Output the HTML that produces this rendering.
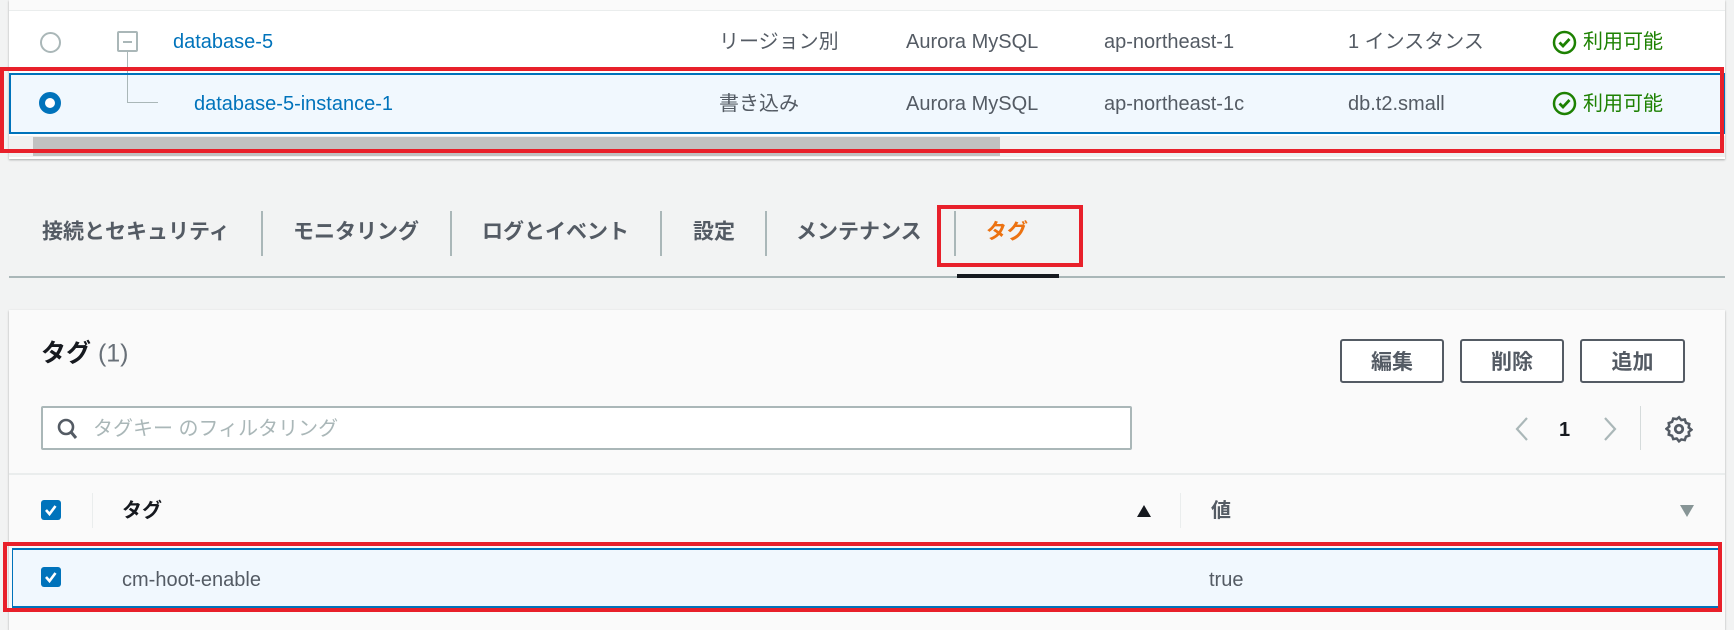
<!DOCTYPE html>
<html><head><meta charset="utf-8"><style>
*{box-sizing:border-box;margin:0;padding:0}
body{width:1734px;height:625px;background:#f2f3f3;position:relative;overflow:hidden;font-family:"Liberation Sans","Noto Sans CJK JP",sans-serif;color:#545b64;font-size:20px}
.a{position:absolute;white-space:nowrap}
.t{line-height:1;transform:translateY(-50%)}
.red{position:absolute;border:4px solid #e8202a}
.link{color:#0073bb}
.tab{font-weight:bold;font-size:21px;color:#545b64}
.sep{position:absolute;width:2px;background:#aab7b8}
.btn{position:absolute;border:2px solid #545b64;border-radius:3px;background:#fff;font-weight:bold;font-size:21px;display:flex;align-items:center;justify-content:center;color:#545b64}
.cb{position:absolute;width:20px;height:20px;background:#0073bb;border-radius:3px}
</style></head><body>
<div class="a" style="left:9px;top:0;width:1716px;height:159px;background:#fff;box-shadow:0 1px 2px rgba(0,0,0,.3)"></div>
<div class="a" style="left:9px;top:0;width:1716px;height:11px;background:#fafafa;border-bottom:1px solid #eaeded"></div>
<div class="a" style="left:40px;top:32px;width:21px;height:21px;border:2px solid #aab7b8;border-radius:50%"></div>
<div class="a" style="left:117px;top:31px;width:21px;height:21px;border:2px solid #aab7b8;border-radius:2px"></div>
<div class="a" style="left:123px;top:41px;width:9px;height:2px;background:#aab7b8"></div>
<div class="a" style="left:127px;top:52px;width:1px;height:51px;background:#aab7b8"></div>
<div class="a" style="left:127px;top:102px;width:31px;height:1px;background:#aab7b8"></div>
<div class="a t link" style="left:173px;top:42px">database-5</div>
<div class="a t" style="left:719px;top:42px">リージョン別</div>
<div class="a t" style="left:906px;top:42px">Aurora MySQL</div>
<div class="a t" style="left:1104px;top:42px">ap-northeast-1</div>
<div class="a t" style="left:1348px;top:42px">1 インスタンス</div>
<svg class="a" style="left:1552px;top:30px" width="25" height="25" viewBox="0 0 25 25"><circle cx="12.5" cy="12.5" r="10.5" fill="none" stroke="#1d8102" stroke-width="2.5"/><path d="M7.5 12.5l3.5 3.5 6.5-7" fill="none" stroke="#1d8102" stroke-width="2.8"/></svg>
<div class="a t" style="left:1583px;top:42px;color:#1d8102">利用可能</div>
<div class="a" style="left:9px;top:73px;width:1716px;height:61px;background:#f1f8fe;border:2px solid #0073bb"></div>
<div class="a" style="left:39px;top:92px;width:22px;height:22px;border:6px solid #0073bb;border-radius:50%;background:#fff"></div>
<div class="a" style="left:127px;top:75px;width:1px;height:28px;background:#aab7b8"></div>
<div class="a" style="left:127px;top:102px;width:31px;height:1px;background:#aab7b8"></div>
<div class="a t link" style="left:194px;top:104px">database-5-instance-1</div>
<div class="a t" style="left:719px;top:104px">書き込み</div>
<div class="a t" style="left:906px;top:104px">Aurora MySQL</div>
<div class="a t" style="left:1104px;top:104px">ap-northeast-1c</div>
<div class="a t" style="left:1348px;top:104px">db.t2.small</div>
<svg class="a" style="left:1552px;top:91px" width="25" height="25" viewBox="0 0 25 25"><circle cx="12.5" cy="12.5" r="10.5" fill="none" stroke="#1d8102" stroke-width="2.5"/><path d="M7.5 12.5l3.5 3.5 6.5-7" fill="none" stroke="#1d8102" stroke-width="2.8"/></svg>
<div class="a t" style="left:1583px;top:104px;color:#1d8102">利用可能</div>
<div class="a" style="left:9px;top:136px;width:1716px;height:21px;background:#f0f0f0"></div>
<div class="a" style="left:33px;top:137px;width:967px;height:19px;background:#c1c1c1"></div>
<div class="red" style="left:0;top:67px;width:1724px;height:86px"></div>
<div class="a t tab" style="left:42px;top:232px">接続とセキュリティ</div>
<div class="sep" style="left:261px;top:211px;height:45px"></div>
<div class="a t tab" style="left:293px;top:232px">モニタリング</div>
<div class="sep" style="left:450px;top:211px;height:45px"></div>
<div class="a t tab" style="left:482px;top:232px">ログとイベント</div>
<div class="sep" style="left:660px;top:211px;height:45px"></div>
<div class="a t tab" style="left:693px;top:232px">設定</div>
<div class="sep" style="left:765px;top:211px;height:45px"></div>
<div class="a t tab" style="left:796px;top:232px">メンテナンス</div>
<div class="sep" style="left:954px;top:211px;height:45px"></div>
<div class="a t tab" style="left:986px;top:232px;color:#ec7211">タグ</div>
<div class="a" style="left:9px;top:276px;width:1716px;height:2px;background:#aab7b8"></div>
<div class="a" style="left:957px;top:274px;width:102px;height:4px;background:#16191f"></div>
<div class="red" style="left:937px;top:205px;width:146px;height:62px"></div>
<div class="a" style="left:9px;top:310px;width:1716px;height:320px;background:#fafafa;box-shadow:0 1px 2px rgba(0,0,0,.3)"></div>
<div class="a t" style="left:41px;top:354px;font-size:25px;font-weight:bold;color:#16191f">タグ <span style="font-weight:normal;color:#687078">(1)</span></div>
<div class="btn" style="left:1340px;top:339px;width:104px;height:44px">編集</div>
<div class="btn" style="left:1460px;top:339px;width:104px;height:44px">削除</div>
<div class="btn" style="left:1580px;top:339px;width:105px;height:44px">追加</div>
<div class="a" style="left:41px;top:406px;width:1091px;height:44px;background:#fff;border:2px solid #aab7b8;border-radius:2px"></div>
<svg class="a" style="left:56px;top:417px" width="24" height="24" viewBox="0 0 24 24"><circle cx="10" cy="10" r="7" fill="none" stroke="#545b64" stroke-width="2.6"/><path d="M15 15l5 6" stroke="#545b64" stroke-width="3"/></svg>
<div class="a t" style="left:93px;top:429px;color:#aab7b8">タグキー のフィルタリング</div>
<svg class="a" style="left:1514px;top:416px" width="16" height="26" viewBox="0 0 16 26"><path d="M13 2L3 13l10 11" fill="none" stroke="#aab7b8" stroke-width="2.2"/></svg>
<div class="a t" style="left:1559px;top:430px;font-weight:bold;color:#16191f">1</div>
<svg class="a" style="left:1602px;top:416px" width="16" height="26" viewBox="0 0 16 26"><path d="M3 2l10 11L3 24" fill="none" stroke="#aab7b8" stroke-width="2.2"/></svg>
<div class="a" style="left:1640px;top:406px;width:1px;height:44px;background:#d5dbdb"></div>
<svg class="a" style="left:1665px;top:415px" width="28" height="28" viewBox="0 0 24 24"><path d="M12 1.5l2.2 2.7 3.3-.6 1.1 3.2 3.2 1.1-.6 3.3 2.7 2.2-2.7 2.2.6 3.3-3.2 1.1-1.1 3.2-3.3-.6L12 24.4l-2.2-2.7-3.3.6-1.1-3.2-3.2-1.1.6-3.3L.1 12.5l2.7-2.2-.6-3.3 3.2-1.1 1.1-3.2 3.3.6z" fill="none" stroke="#545b64" stroke-width="2.4" transform="translate(1.2 .6) scale(.9)"/><circle cx="12" cy="12" r="3.2" fill="none" stroke="#545b64" stroke-width="2.4"/></svg>
<div class="a" style="left:9px;top:473px;width:1716px;height:2px;background:#eaeded"></div>
<div class="cb" style="left:41px;top:500px"></div>
<svg class="a" style="left:41px;top:500px" width="20" height="20" viewBox="0 0 20 20"><path d="M5 10l3.5 4 6-8" fill="none" stroke="#fff" stroke-width="2.6"/></svg>
<div class="a" style="left:92px;top:493px;width:1px;height:35px;background:#eaeded"></div>
<div class="a t" style="left:122px;top:511px;font-weight:bold;color:#16191f">タグ</div>
<svg class="a" style="left:1136px;top:504px" width="16" height="14"><path d="M8 1l7 12H1z" fill="#16191f"/></svg>
<div class="a" style="left:1180px;top:493px;width:1px;height:35px;background:#eaeded"></div>
<div class="a t" style="left:1211px;top:511px;font-weight:bold;color:#545b64">値</div>
<svg class="a" style="left:1679px;top:504px" width="16" height="14"><path d="M1 1h14L8 13z" fill="#879596"/></svg>
<div class="a" style="left:12px;top:548px;width:1708px;height:60px;background:#f1f8fe;border:2px solid #0073bb;border-left-width:1px;border-right-width:1px"></div>
<div class="cb" style="left:41px;top:567px"></div>
<svg class="a" style="left:41px;top:567px" width="20" height="20" viewBox="0 0 20 20"><path d="M5 10l3.5 4 6-8" fill="none" stroke="#fff" stroke-width="2.6"/></svg>
<div class="a t" style="left:122px;top:580px">cm-hoot-enable</div>
<div class="a t" style="left:1209px;top:580px">true</div>
<div class="red" style="left:3px;top:542px;width:1719px;height:70px"></div>
</body></html>
